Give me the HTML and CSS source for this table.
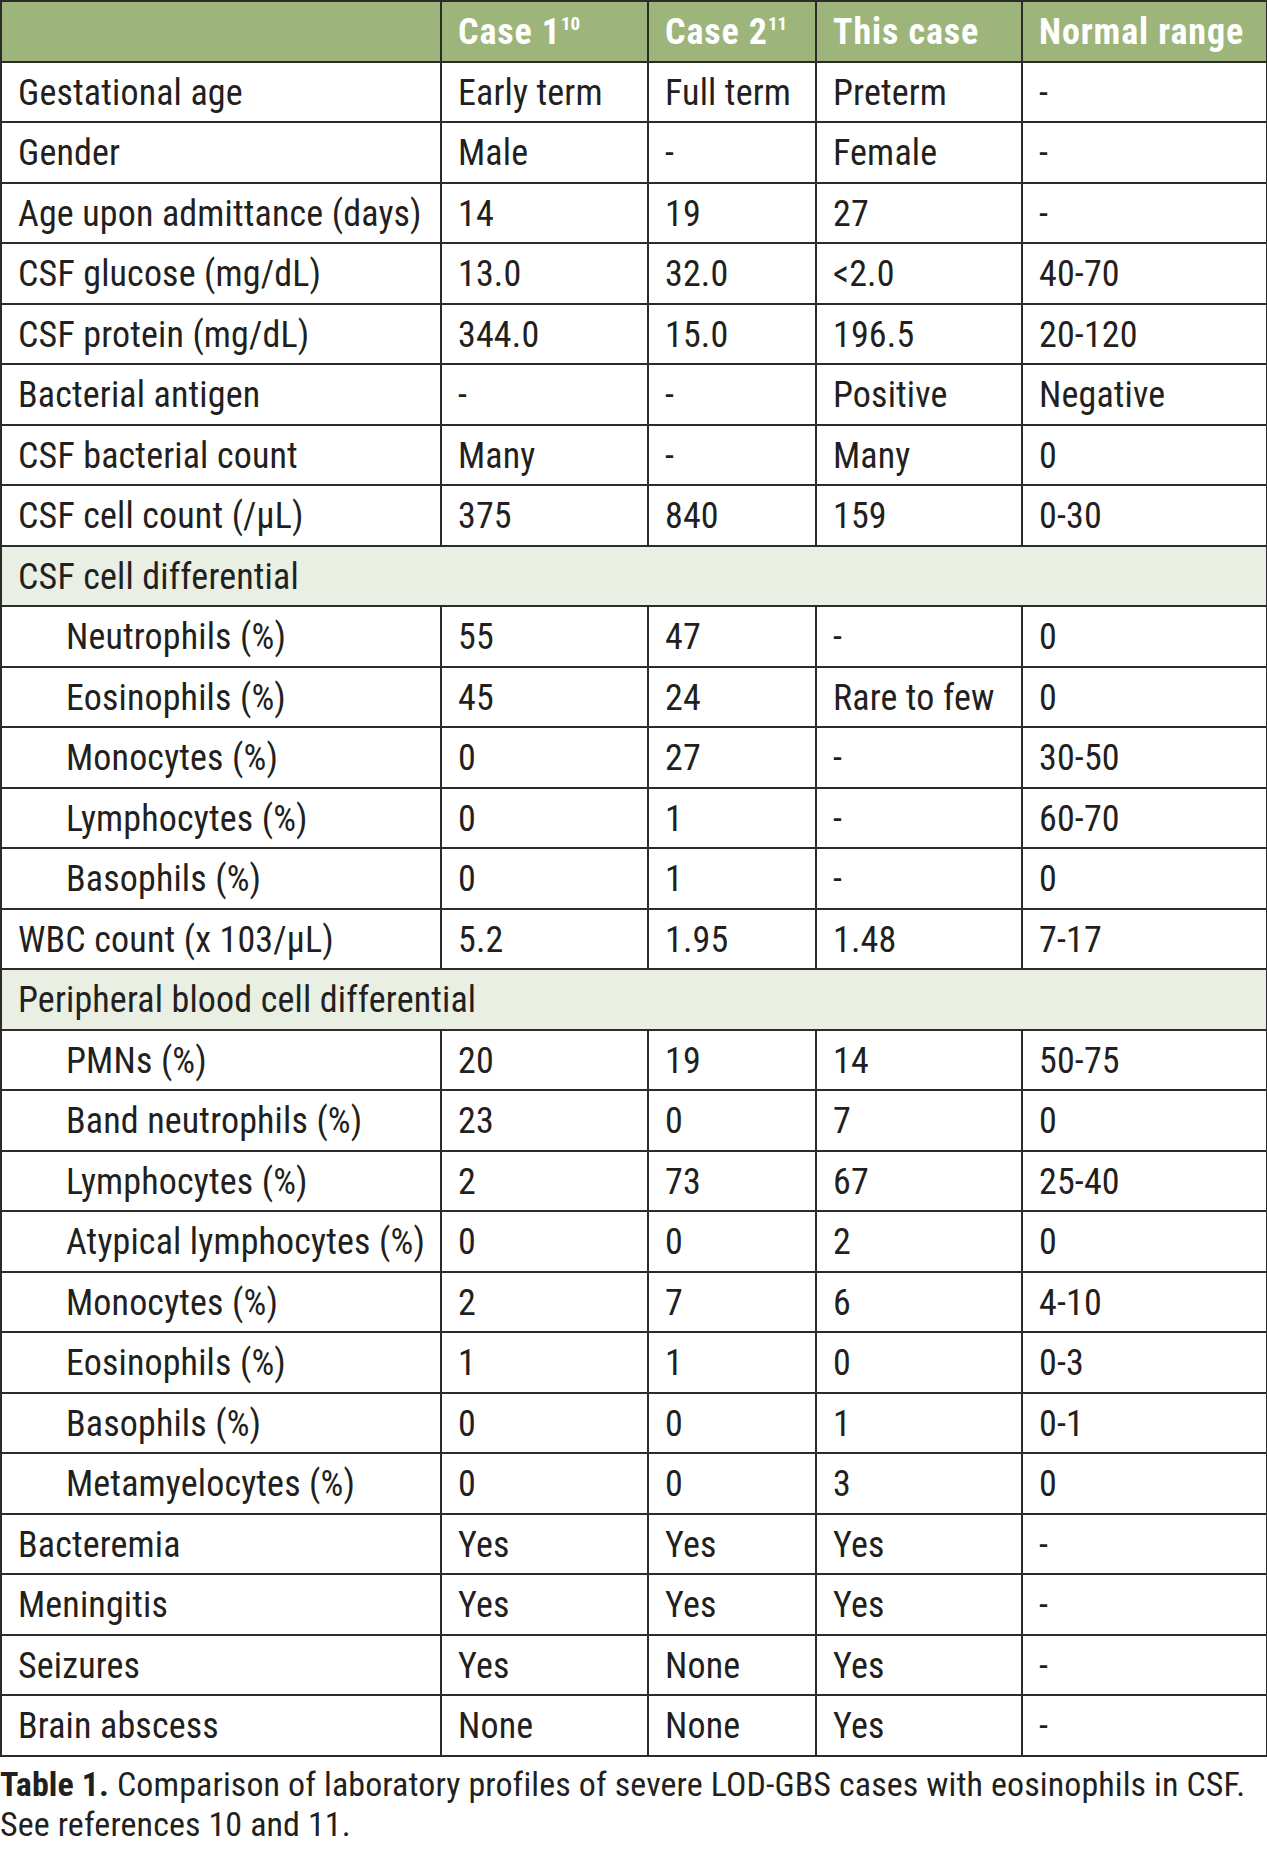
FILE: index.html
```html
<!DOCTYPE html>
<html lang="en">
<head>
<meta charset="utf-8">
<title>Table 1</title>
<link rel="stylesheet" href="styles.css">
</head>
<body>
<figure class="fig">
<table class="lab">
  <colgroup>
    <col class="c-label">
    <col class="c-case1">
    <col class="c-case2">
    <col class="c-this">
    <col class="c-norm">
  </colgroup>
  <thead>
    <tr>
      <th></th>
      <th>Case 1<sup>10</sup></th>
      <th>Case 2<sup>11</sup></th>
      <th>This case</th>
      <th>Normal range</th>
    </tr>
  </thead>
  <tbody>
    <tr><td>Gestational age</td><td>Early term</td><td>Full term</td><td>Preterm</td><td>-</td></tr>
    <tr><td>Gender</td><td>Male</td><td>-</td><td>Female</td><td>-</td></tr>
    <tr><td>Age upon admittance (days)</td><td>14</td><td>19</td><td>27</td><td>-</td></tr>
    <tr><td>CSF glucose (mg/dL)</td><td>13.0</td><td>32.0</td><td>&lt;2.0</td><td>40-70</td></tr>
    <tr><td>CSF protein (mg/dL)</td><td>344.0</td><td>15.0</td><td>196.5</td><td>20-120</td></tr>
    <tr><td>Bacterial antigen</td><td>-</td><td>-</td><td>Positive</td><td>Negative</td></tr>
    <tr><td>CSF bacterial count</td><td>Many</td><td>-</td><td>Many</td><td>0</td></tr>
    <tr><td>CSF cell count (/µL)</td><td>375</td><td>840</td><td>159</td><td>0-30</td></tr>
    <tr class="section"><td colspan="5">CSF cell differential</td></tr>
    <tr><td class="sub">Neutrophils (%)</td><td>55</td><td>47</td><td>-</td><td>0</td></tr>
    <tr><td class="sub">Eosinophils (%)</td><td>45</td><td>24</td><td>Rare to few</td><td>0</td></tr>
    <tr><td class="sub">Monocytes (%)</td><td>0</td><td>27</td><td>-</td><td>30-50</td></tr>
    <tr><td class="sub">Lymphocytes (%)</td><td>0</td><td>1</td><td>-</td><td>60-70</td></tr>
    <tr><td class="sub">Basophils (%)</td><td>0</td><td>1</td><td>-</td><td>0</td></tr>
    <tr><td>WBC count (x 103/µL)</td><td>5.2</td><td>1.95</td><td>1.48</td><td>7-17</td></tr>
    <tr class="section"><td colspan="5">Peripheral blood cell differential</td></tr>
    <tr><td class="sub">PMNs (%)</td><td>20</td><td>19</td><td>14</td><td>50-75</td></tr>
    <tr><td class="sub">Band neutrophils (%)</td><td>23</td><td>0</td><td>7</td><td>0</td></tr>
    <tr><td class="sub">Lymphocytes (%)</td><td>2</td><td>73</td><td>67</td><td>25-40</td></tr>
    <tr><td class="sub">Atypical lymphocytes (%)</td><td>0</td><td>0</td><td>2</td><td>0</td></tr>
    <tr><td class="sub">Monocytes (%)</td><td>2</td><td>7</td><td>6</td><td>4-10</td></tr>
    <tr><td class="sub">Eosinophils (%)</td><td>1</td><td>1</td><td>0</td><td>0-3</td></tr>
    <tr><td class="sub">Basophils (%)</td><td>0</td><td>0</td><td>1</td><td>0-1</td></tr>
    <tr><td class="sub">Metamyelocytes (%)</td><td>0</td><td>0</td><td>3</td><td>0</td></tr>
    <tr><td>Bacteremia</td><td>Yes</td><td>Yes</td><td>Yes</td><td>-</td></tr>
    <tr><td>Meningitis</td><td>Yes</td><td>Yes</td><td>Yes</td><td>-</td></tr>
    <tr><td>Seizures</td><td>Yes</td><td>None</td><td>Yes</td><td>-</td></tr>
    <tr><td>Brain abscess</td><td>None</td><td>None</td><td>Yes</td><td>-</td></tr>
  </tbody>
</table>
<figcaption class="caption"><b>Table 1.</b> Comparison of laboratory profiles of severe LOD-GBS cases with eosinophils in CSF. See references 10 and 11.</figcaption>
</figure>
</body>
</html>
```

FILE: styles.css
```css
html, body {
  margin: 0;
  padding: 0;
  background: #ffffff;
}

body {
  font-family: "Roboto Condensed", "Roboto", "Liberation Sans", sans-serif;
  color: #231f20;
}

.fig {
  margin: 0;
  width: 1267px;
}

.lab {
  border-collapse: collapse;
  table-layout: fixed;
  width: 1266px;
  border: 2px solid #5a5a5a;
  font-size: 36px;
  letter-spacing: 0.15px;
}

.c-label { width: 440px; }
.c-case1 { width: 207px; }
.c-case2 { width: 168px; }
.c-this  { width: 206px; }
.c-norm  { width: 245px; }

.lab tr {
  height: 60.5px;
}

.lab th,
.lab td {
  border: 2px solid #2b2b2b;
  padding: 2px 0 0 16px;
  text-align: left;
  vertical-align: middle;
  white-space: nowrap;
  line-height: 1;
}

.lab th {
  background: #9db57b;
  color: #ffffff;
  font-weight: bold;
  letter-spacing: 0.9px;
}

.lab sup {
  font-size: 19px;
  letter-spacing: 0;
  vertical-align: 14px;
  line-height: 0;
}

.lab td.sub {
  padding-left: 64px;
}

.lab tr.section td {
  background: #e9efe3;
}

.caption {
  margin: 7px 0 0 0;
  font-size: 34px;
  line-height: 40px;
  letter-spacing: 0.1px;
  color: #231f20;
}

.caption b {
  font-weight: bold;
}
```
